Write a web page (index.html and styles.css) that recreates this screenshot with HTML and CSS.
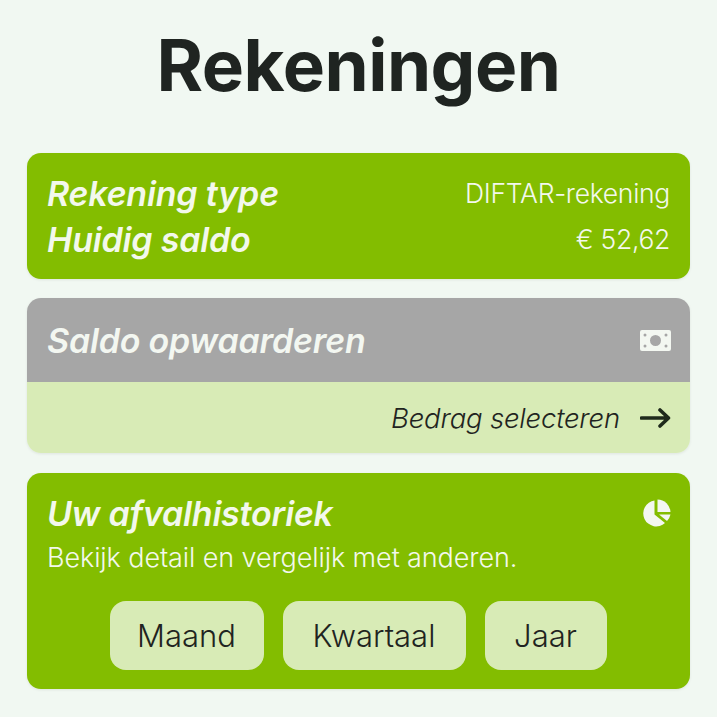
FILE: index.html
```html
<!DOCTYPE html>
<html lang="nl">
<head>
  <meta charset="UTF-8" />
  <meta name="viewport" content="width=device-width, initial-scale=1" />
  <title>Rekeningen</title>
  <link rel="stylesheet" href="styles.css">
</head>
<body>

  <h1>Rekeningen</h1>

  <div class="card card-green account">
    <div class="row">
      <span class="label">Rekening type</span>
      <span class="value">DIFTAR-rekening</span>
    </div>
    <div class="row">
      <span class="label">Huidig saldo</span>
      <span class="value">€ 52,62</span>
    </div>
  </div>

  <div class="card topup">
    <div class="topup-head">
      <span class="label">Saldo opwaarderen</span>
      <svg class="icon-money" viewBox="0 0 31 21" aria-hidden="true">
        <path fill="#f3f7f1" fill-rule="evenodd" d="M2 0h27a2 2 0 0 1 2 2v17a2 2 0 0 1-2 2H2a2 2 0 0 1-2-2V2a2 2 0 0 1 2-2zm13.500 5a5.500 5.500 0 1 0 0 11 5.500 5.500 0 0 0 0-11zM5 3.500a1.500 1.500 0 1 0 0 3 1.500 1.500 0 0 0 0-3zm21 0a1.500 1.500 0 1 0 0 3 1.500 1.500 0 0 0 0-3zM5 14.500a1.500 1.500 0 1 0 0 3 1.500 1.500 0 0 0 0-3zm21 0a1.500 1.500 0 1 0 0 3 1.500 1.500 0 0 0 0-3z"/>
      </svg>
    </div>
    <div class="topup-foot">
      <span class="select-text">Bedrag selecteren</span>
      <svg class="icon-arrow" viewBox="0 0 31 20" aria-hidden="true">
        <path d="M1.500 10h27M20 2l8.500 8-8.500 8" fill="none" stroke="#1f2a1c" stroke-width="3.600" stroke-linecap="round" stroke-linejoin="round"/>
      </svg>
    </div>
  </div>

  <div class="card card-green history">
    <div class="row">
      <span class="label">Uw afvalhistoriek</span>
      <svg class="icon-pie" viewBox="0 0 29 28" aria-hidden="true">
        <path fill="#f3f7f1" d="M12.500 1.500A13 13 0 1 0 23 24L12.500 15.500z"/>
        <path fill="#f3f7f1" d="M15.500 0.500A13 13 0 0 1 28.500 13H15.500z"/>
        <path fill="#f3f7f1" d="M17 15.500h11.500A13 13 0 0 1 25 22z"/>
      </svg>
    </div>
    <p class="history-text">Bekijk detail en vergelijk met anderen.</p>
    <div class="periods">
      <button class="period">Maand</button>
      <button class="period period-wide">Kwartaal</button>
      <button class="period period-narrow">Jaar</button>
    </div>
  </div>

</body>
</html>
```

FILE: styles.css
```css
body {
  font-family: 'Inter', sans-serif;
  background: #f1f8f2;
  color: #1f2421;
  margin: 0;
  padding: 0 27px;
}

h1 {
  margin: 0;
  padding-top: 24px;
  height: 153px;
  box-sizing: border-box;
  text-align: center;
  font-size: 71px;
  line-height: 82px;
  font-weight: 700;
  letter-spacing: -0.5px;
}

.card {
  border-radius: 14px;
  overflow: hidden;
  margin-bottom: 19px;
  box-shadow: 0 1px 3px rgba(0,0,0,0.08);
}

.card-green {
  background: #83bd00;
  color: #f3f8ec;
}

.row {
  display: flex;
  justify-content: space-between;
  align-items: center;
}

.label {
  font-size: 34px;
  font-style: italic;
  font-weight: 600;
  letter-spacing: -0.2px;
}

.value {
  font-size: 26.5px;
  font-weight: 300;
  letter-spacing: -0.3px;
}

.account {
  height: 126px;
  box-sizing: border-box;
  padding: 17px 20px;
}

.account .row {
  height: 46px;
}

.topup {
  margin-bottom: 20px;
}

.topup-head {
  height: 84px;
  background: #a6a6a6;
  color: #f3f7f1;
  display: flex;
  justify-content: space-between;
  align-items: center;
  padding: 0 19px 0 20px;
}

.icon-money {
  width: 31px;
  height: 21px;
}

.topup-foot {
  height: 71px;
  background: #d8ebb6;
  display: flex;
  justify-content: flex-end;
  align-items: center;
  gap: 20px;
  padding: 0 19px;
}

.select-text {
  font-size: 27.5px;
  font-style: italic;
  font-weight: 300;
  letter-spacing: -0.2px;
}

.icon-arrow {
  width: 31px;
  height: 20px;
}

.history {
  height: 216px;
  box-sizing: border-box;
  padding: 18px 19px 0 20px;
}

.history .row {
  height: 44px;
}

.icon-pie {
  width: 29px;
  height: 28px;
}

.history-text {
  margin: 0;
  padding-top: 1px;
  font-size: 27px;
  line-height: 44px;
  font-weight: 300;
  letter-spacing: -0.1px;
}

.periods {
  display: flex;
  justify-content: center;
  gap: 19px;
  margin-top: 21px;
  padding-right: 2px;
}

.period {
  height: 69px;
  width: 154px;
  border: none;
  border-radius: 16px;
  background: #d8ebb6;
  color: #1f2421;
  font-family: inherit;
  font-size: 31px;
  font-weight: 300;
}

.period-wide {
  width: 183px;
}

.period-narrow {
  width: 122px;
}
```
